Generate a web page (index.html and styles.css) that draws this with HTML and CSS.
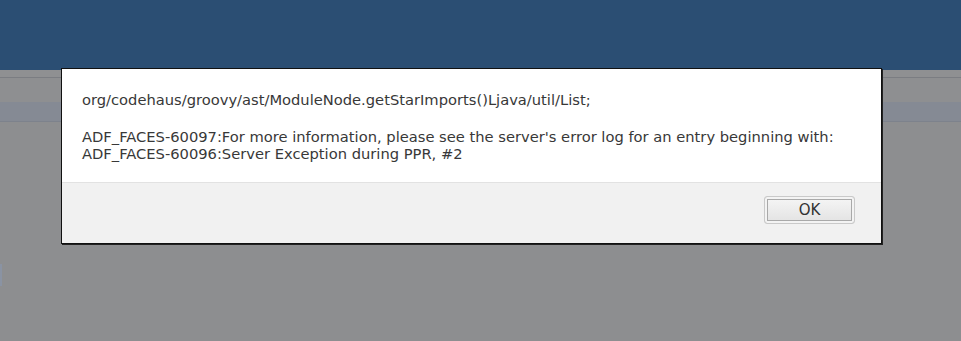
FILE: index.html
```html
<!DOCTYPE html>
<html lang="en">
<head>
    <meta charset="UTF-8">
    <title>Error</title>
    <link rel="stylesheet" href="styles.css">
</head>
<body>

    <div class="page">
        <div class="header"></div>
        <div class="toolbar"></div>
        <div class="subbar"></div>
        <div class="tabbar"></div>
        <div class="content">
            <div class="side-tab"></div>
        </div>
    </div>

    <div class="dialog">
        <div class="dialog-body">
            <p class="msg">org/codehaus/groovy/ast/ModuleNode.getStarImports()Ljava/util/List;</p>
            <p class="msg">ADF_FACES-60097:For more information, please see the server's error log for an entry beginning with:<br>ADF_FACES-60096:Server Exception during PPR, #2</p>
        </div>
        <div class="dialog-footer">
            <button class="ok-btn">OK</button>
        </div>
    </div>

</body>
</html>
```

FILE: styles.css
```css
html, body {
    margin: 0;
    height: 100%;
}
body {
    font-family: 'DejaVu Sans', sans-serif;
    background: #8d8e90;
    overflow: hidden;
}
.page {
    width: 961px;
    height: 341px;
}
.header {
    height: 70px;
    background: #2b4e73;
}
.toolbar {
    height: 7px;
    background: #8f9092;
    border-bottom: 1px solid #7b7d82;
}
.subbar {
    height: 24px;
    background: #8e8f91;
}
.tabbar {
    height: 19px;
    background: #858a94;
    border-bottom: 1px solid #7d828c;
}
.content {
    padding-top: 142px;
}
.side-tab {
    width: 2px;
    height: 22px;
    background: #8a93a3;
}
.dialog {
    position: absolute;
    left: 61px;
    top: 68px;
    width: 819px;
    background: #fff;
    border: 1px solid #111;
    box-shadow: 1px 1px 0 #222;
}
.dialog-body {
    padding: 22px 20px 20px 20px;
    border-bottom: 1px solid #e2e2e2;
}
.msg {
    margin: 0 0 20px 0;
    font-size: 14.7px;
    line-height: 17px;
    color: #383838;
}
.msg:last-child {
    margin-bottom: 0;
}
.dialog-footer {
    height: 60px;
    background: #f1f1f1;
    display: flex;
    justify-content: flex-end;
    align-items: flex-start;
    padding-right: 26px;
}
.ok-btn {
    margin-top: 13px;
    width: 91px;
    height: 28px;
    border: 1px solid #c9c9c9;
    border-radius: 3px;
    background: #f3f3f3;
    box-shadow: inset 0 0 0 2px #f3f3f3, inset 0 0 0 3px #a9a9a9;
    background-image: linear-gradient(#f6f6f6, #e2e2e2);
    font-family: 'DejaVu Sans', sans-serif;
    font-size: 15px;
    color: #333;
    padding: 0;
}
```
